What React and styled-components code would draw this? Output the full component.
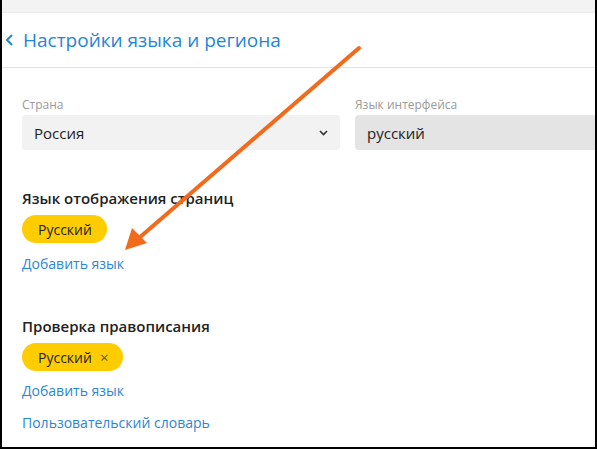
import styled, { createGlobalStyle } from 'styled-components';

const GlobalStyle = createGlobalStyle`
  html, body {
    margin: 0;
    padding: 0;
    background: #ffffff;
  }
  body {
    font-family: 'Open Sans', 'Liberation Sans', sans-serif;
  }
`;

const Frame = styled.div`
  position: relative;
  width: 597px;
  height: 449px;
  box-sizing: border-box;
  border-left: 2px solid #000;
  border-right: 2px solid #000;
  border-bottom: 2px solid #000;
  background: #fff;
  overflow: hidden;
`;

const TopStrip = styled.div`
  height: 12px;
  background: #f3f3f3;
  border-bottom: 1px solid #ececec;
`;

const Header = styled.div`
  display: flex;
  align-items: center;
  gap: 8px;
  height: 54px;
  padding-left: 3px;
  border-bottom: 1px solid #e3e3e3;
`;

const Title = styled.h1`
  margin: 0;
  font-size: 19px;
  font-weight: 400;
  color: #1f86d6;
`;

const Content = styled.div`
  padding: 29px 0 0 20px;
`;

const Fields = styled.div`
  display: grid;
  grid-template-columns: 318px 260px;
  column-gap: 15px;
`;

const Field = styled.div`
  display: flex;
  flex-direction: column;
  gap: 2px;
`;

const Label = styled.span`
  font-size: 12px;
  line-height: 16px;
  color: #9a9a9a;
`;

const Select = styled.div`
  display: flex;
  align-items: center;
  justify-content: space-between;
  height: 35px;
  padding: 0 12px;
  border-radius: 4px;
  background: ${(p) => (p.$disabled ? '#e4e4e4' : '#f2f2f2')};
  font-size: 15px;
  color: #222;
`;

const Section = styled.div`
  display: flex;
  flex-direction: column;
  align-items: flex-start;
  margin-top: ${(p) => p.$top}px;
`;

const Heading = styled.h2`
  margin: 0 0 7px;
  font-size: 15px;
  line-height: 20px;
  font-weight: 600;
  color: #222;
`;

const Pill = styled.div`
  display: inline-flex;
  align-items: center;
  gap: 8px;
  height: 28px;
  padding: 0 15px 0 16px;
  border-radius: 14px;
  background: #ffcc00;
  font-size: 14px;
  color: #222;
`;

const Close = styled.span`
  font-size: 15px;
  color: #6a5a10;
  line-height: 1;
`;

const Link = styled.a`
  font-size: 14px;
  line-height: 19px;
  color: #2a86d4;
  text-decoration: none;
  margin-top: ${(p) => p.$top}px;
`;

const ArrowOverlay = styled.svg`
  position: absolute;
  left: 0;
  top: 0;
  pointer-events: none;
`;

const Chevron = () => (
  <svg width="10" height="14" viewBox="0 0 10 14">
    <path d="M7 2 L2 7 L7 12" fill="none" stroke="#1f86d6" strokeWidth="2" />
  </svg>
);

const Caret = () => (
  <svg width="9" height="6" viewBox="0 0 9 6">
    <path d="M1 1 L4.5 4.5 L8 1" fill="none" stroke="#333" strokeWidth="1.6" />
  </svg>
);

const App = () => {
  return (
    <>
      <GlobalStyle />
      <Frame>
        <TopStrip />
        <Header>
          <Chevron />
          <Title>Настройки языка и региона</Title>
        </Header>
        <Content>
          <Fields>
            <Field>
              <Label>Страна</Label>
              <Select>
                Россия
                <Caret />
              </Select>
            </Field>
            <Field>
              <Label>Язык интерфейса</Label>
              <Select $disabled>русский</Select>
            </Field>
          </Fields>

          <Section $top={38}>
            <Heading>Язык отображения страниц</Heading>
            <Pill>Русский</Pill>
            <Link $top={11}>Добавить язык</Link>
          </Section>

          <Section $top={43}>
            <Heading>Проверка правописания</Heading>
            <Pill>
              Русский
              <Close>×</Close>
            </Pill>
            <Link $top={10}>Добавить язык</Link>
            <Link $top={13}>Пользовательский словарь</Link>
          </Section>
        </Content>

        <ArrowOverlay width="597" height="449" viewBox="0 0 597 449">
          <line x1="357" y1="48" x2="137" y2="238" stroke="#f26a1b" strokeWidth="4" strokeLinecap="round" />
          <path d="M123 250 L130 228 L145 243 Z" fill="#f26a1b" />
        </ArrowOverlay>
      </Frame>
    </>
  );
};

export default App;
